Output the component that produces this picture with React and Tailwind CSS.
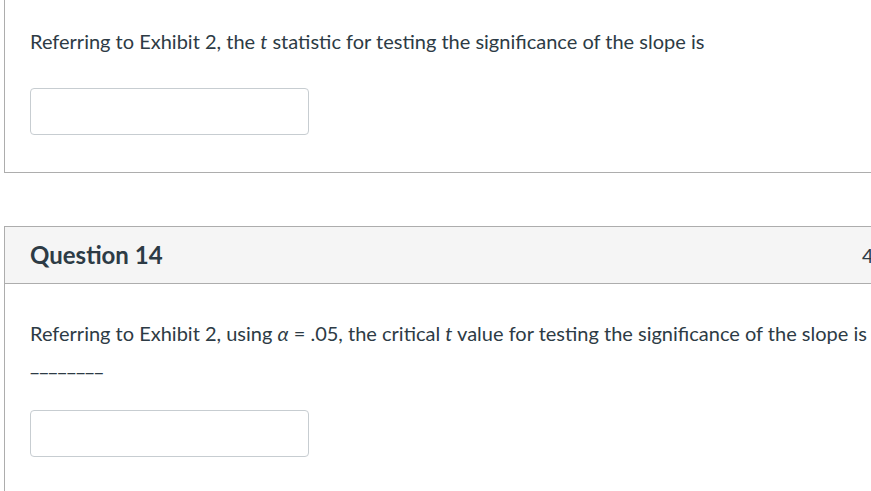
export default function App() {
  return (
    <div
      className="w-[871px] h-[491px] overflow-hidden bg-white text-[#2d3b45]"
      style={{ fontFamily: "Lato, 'Open Sans', sans-serif" }}
    >
      <div className="ml-[4px] w-[900px] border-l border-b border-[#adadad] h-[173px] pt-[26px] pl-[25px]">
        <p className="text-[20px] leading-[30px]">
          Referring to Exhibit 2, the <i>t</i> statistic for testing the significance of the slope is
        </p>
        <div className="mt-[32px] w-[279px] h-[47px] rounded border border-[#c7cdd1] bg-white" />
      </div>

      <div className="mt-[53px] ml-[4px] w-[900px] h-[300px] border-l border-t border-[#adadad]">
        <div className="h-[57px] bg-[#f5f5f5] border-b border-[#adadad] pl-[25px] flex items-center">
          <h2 className="w-[832px] shrink-0 text-[24px] font-bold">Question 14</h2>
          <span className="shrink-0 whitespace-nowrap text-[20px] text-[#2d3b45]">4 pts</span>
        </div>
        <div className="pt-[34px] pl-[25px]">
          <p className="text-[20px] leading-[30px] whitespace-nowrap">
            Referring to Exhibit 2, using <i>α</i> = .05, the critical <i>t</i> value for testing the significance of the slope is
          </p>
          <p className="text-[20px] leading-[30px]">________</p>
          <div className="mt-[32px] w-[279px] h-[47px] rounded border border-[#c7cdd1] bg-white" />
        </div>
      </div>
    </div>
  );
}
